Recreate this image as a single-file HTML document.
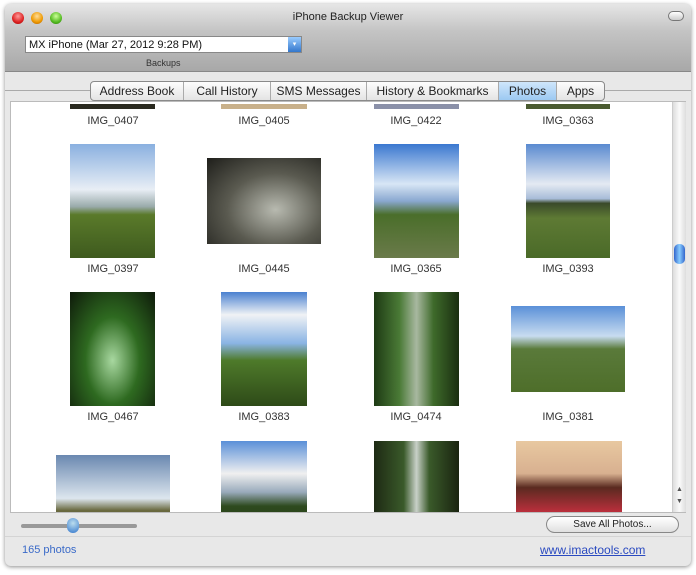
<!DOCTYPE html>
<html><head><style>
*{margin:0;padding:0;box-sizing:border-box}
body{width:696px;height:575px;background:#fff;position:relative;overflow:hidden;font-family:"Liberation Sans",sans-serif}
.a{position:absolute}
.win{left:5px;top:4px;width:686px;height:562px;border-radius:6px;background:#e8e8e8;box-shadow:0 1px 4px rgba(0,0,0,.45);overflow:hidden}
.tb{left:0;top:0;width:686px;height:68px;background:linear-gradient(#e6e6e6,#c4c4c4 40%,#a8a8a8);border-bottom:1px solid #888}
.lbl{font-size:11px;color:#333;text-align:center;width:100px}
.ph{position:absolute}
.tabs{left:90px;top:81px;height:20px;border:1px solid #8a8a8a;border-radius:4px;background:linear-gradient(#fdfdfd,#e4e4e4);font-size:12px;color:#222}
.tabs div{position:absolute;top:0;height:18px;padding-top:2px;border-right:1px solid #aaa;text-align:center;white-space:nowrap}
</style></head><body>
<div class="a win">
 <div class="a tb"></div>
</div>
<div class="a" style="left:12px;top:12px;width:12px;height:12px;border-radius:50%;background:radial-gradient(circle at 50% 35%,#f99,#d22 60%,#900)"></div>
<div class="a" style="left:31px;top:12px;width:12px;height:12px;border-radius:50%;background:radial-gradient(circle at 50% 35%,#fd9,#e90 60%,#a50)"></div>
<div class="a" style="left:50px;top:12px;width:12px;height:12px;border-radius:50%;background:radial-gradient(circle at 50% 35%,#cf9,#5b2 60%,#270)"></div>
<div class="a" style="left:668px;top:11px;width:16px;height:10px;border-radius:5px;border:1px solid #777;background:linear-gradient(#fff,#ccc)"></div>
<div class="a" style="left:0;top:11px;width:696px;text-align:center;font-size:11px;color:#222">iPhone Backup Viewer</div>
<div class="a" style="left:25px;top:36px;width:277px;height:17px;background:#fff;border:1px solid #888;font-size:11px;padding:2px 3px;color:#111">MX iPhone (Mar 27, 2012 9:28 PM)</div>
<div class="a" style="left:288px;top:37px;width:13px;height:15px;background:linear-gradient(#9cf,#37c);font-size:7px;color:#fff;text-align:center;line-height:15px">▾</div>
<div class="a" style="left:146px;top:58px;font-size:9px;color:#333">Backups</div>
<div class="a" style="left:5px;top:90px;width:686px;height:1px;background:#aaa"></div>
<div class="a tabs" style="width:515px">
 <div style="left:0;width:93px">Address Book</div>
 <div style="left:93px;width:87px">Call History</div>
 <div style="left:180px;width:96px">SMS Messages</div>
 <div style="left:276px;width:132px">History &amp; Bookmarks</div>
 <div style="left:408px;width:58px;background:linear-gradient(#cfe6fb,#9cc9f2)">Photos</div>
 <div style="left:466px;width:47px;border-right:none">Apps</div>
</div>
<div class="a" style="left:10px;top:101px;width:676px;height:412px;background:#fff;border:1px solid #bbb;overflow:hidden">
<div style="position:absolute;left:0;top:0;width:676px;height:412px;transform:translate(-11px,-102px)">
<div class="ph" style="left:70px;top:104px;width:85px;height:5px;background:#2a2a20"></div>
<div class="ph" style="left:221px;top:104px;width:86px;height:5px;background:#c8b08a"></div>
<div class="ph" style="left:374px;top:104px;width:85px;height:5px;background:#8a90a8"></div>
<div class="ph" style="left:526px;top:104px;width:84px;height:5px;background:#4a5a30"></div>
<div class="a lbl" style="left:63px;top:115px">IMG_0407</div>
<div class="a lbl" style="left:214px;top:115px">IMG_0405</div>
<div class="a lbl" style="left:366px;top:115px">IMG_0422</div>
<div class="a lbl" style="left:518px;top:115px">IMG_0363</div>
<div class="ph" style="left:70px;top:144px;width:85px;height:114px;background:linear-gradient(#8ab0e0,#e8eef5 40%,#9aa 55%,#5a7a2a 62%,#3e5a1e)"></div>
<div class="ph" style="left:207px;top:158px;width:114px;height:86px;background:radial-gradient(ellipse at 60% 60%,#b8bab0,#5a5a50 50%,#1e1e1a)"></div>
<div class="ph" style="left:374px;top:144px;width:85px;height:114px;background:linear-gradient(#3a78d0,#d8e6f5 35%,#8aa8d0 50%,#4a6e2a 62%,#6a7a4a)"></div>
<div class="ph" style="left:526px;top:144px;width:84px;height:114px;background:linear-gradient(#5a8ad0,#e4eaf2 35%,#a8bcd8 48%,#3a4a2a 52%,#5e7a34 65%,#4a6a28)"></div>
<div class="a lbl" style="left:63px;top:263px">IMG_0397</div>
<div class="a lbl" style="left:214px;top:263px">IMG_0445</div>
<div class="a lbl" style="left:366px;top:263px">IMG_0365</div>
<div class="a lbl" style="left:518px;top:263px">IMG_0393</div>
<div class="ph" style="left:70px;top:292px;width:85px;height:114px;background:radial-gradient(ellipse at 50% 60%,#a8d8a0,#2e6a20 45%,#0e1a0a)"></div>
<div class="ph" style="left:221px;top:292px;width:86px;height:114px;background:linear-gradient(#4a80d0,#f0f2f5 20%,#8ab4e4 45%,#4e7a2a 60%,#2e4a18)"></div>
<div class="ph" style="left:374px;top:292px;width:85px;height:114px;background:linear-gradient(90deg,#1e3a14,#4a7a36 30%,#a8b8a0 50%,#3e6a2a 70%,#1a2e10)"></div>
<div class="ph" style="left:511px;top:306px;width:114px;height:86px;background:linear-gradient(#5a90d8,#c8dcf0 35%,#5a7a3a 50%,#4e6e2a)"></div>
<div class="a lbl" style="left:63px;top:411px">IMG_0467</div>
<div class="a lbl" style="left:214px;top:411px">IMG_0383</div>
<div class="a lbl" style="left:366px;top:411px">IMG_0474</div>
<div class="a lbl" style="left:518px;top:411px">IMG_0381</div>
<div class="ph" style="left:56px;top:455px;width:114px;height:79px;background:linear-gradient(#6a88b0,#dde6ee 55%,#6a6a40 70%,#3e4a22)"></div>
<div class="ph" style="left:221px;top:441px;width:86px;height:93px;background:linear-gradient(#5a90d8,#f0f0f0 35%,#9ab 55%,#2e4a1e 70%,#243a16)"></div>
<div class="ph" style="left:374px;top:441px;width:85px;height:93px;background:linear-gradient(90deg,#1e2a14,#3a5a2a 35%,#c8d0c8 50%,#3a5a2a 65%,#1a2410)"></div>
<div class="ph" style="left:516px;top:441px;width:106px;height:93px;background:linear-gradient(#e8c8a0,#d8b090 35%,#5a2a20 50%,#c83040 80%,#d84050)"></div>
</div>
</div>
<div class="a" style="left:672px;top:102px;width:14px;height:410px;background:linear-gradient(90deg,#ddd,#fafafa,#ddd);border-left:1px solid #ccc"></div>
<div class="a" style="left:674px;top:244px;width:11px;height:20px;border-radius:5px;background:linear-gradient(90deg,#36c,#8cf,#36c)"></div>
<div class="a" style="left:676px;top:486px;font-size:7px;color:#555">▲</div>
<div class="a" style="left:676px;top:498px;font-size:7px;color:#555">▼</div>
<div class="a" style="left:5px;top:536px;width:686px;height:1px;background:#d4d4d4"></div>
<div class="a" style="left:21px;top:524px;width:116px;height:4px;border-radius:2px;background:#999"></div>
<div class="a" style="left:67px;top:518px;width:12px;height:15px;border-radius:6px;background:radial-gradient(circle at 50% 35%,#bde,#37c)"></div>
<div class="a" style="left:546px;top:516px;width:133px;height:17px;border:1px solid #888;border-radius:9px;background:linear-gradient(#fff,#e0e0e0);font-size:10px;text-align:center;line-height:15px;color:#222">Save All Photos...</div>
<div class="a" style="left:22px;top:544px;font-size:11px;color:#3a6ac8">165 photos</div>
<div class="a" style="left:540px;top:543px;font-size:12px;color:#2a4ac0;text-decoration:underline">www.imactools.com</div>
</body></html>
